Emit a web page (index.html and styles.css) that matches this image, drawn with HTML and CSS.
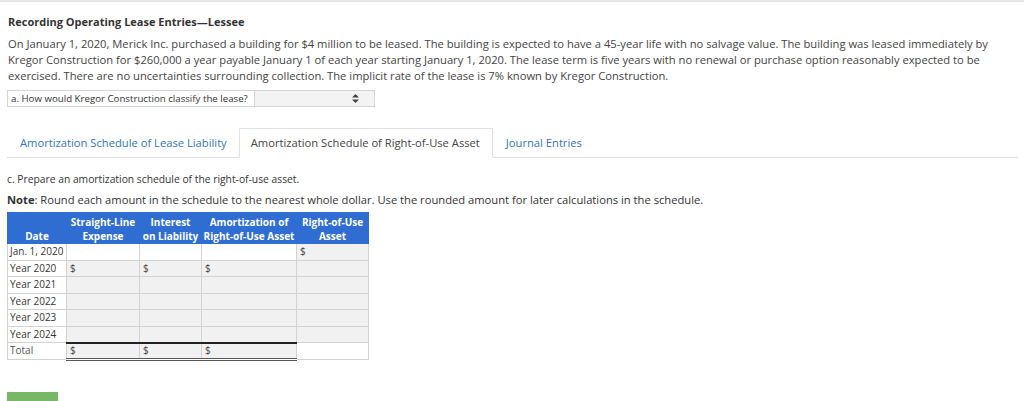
FILE: index.html
```html
<!DOCTYPE html>
<html>
<head>
<meta charset="utf-8">
<link rel="stylesheet" href="styles.css">
</head>
<body>
<div class="topline"></div>
<div class="page">
  <h1 class="title">Recording Operating Lease Entries—Lessee</h1>
  <p class="para">On January 1, 2020, Merick Inc. purchased a building for $4 million to be leased. The building is expected to have a 45-year life with no salvage value. The building was leased immediately by Kregor Construction for $260,000 a year payable January 1 of each year starting January 1, 2020. The lease term is five years with no renewal or purchase option reasonably expected to be exercised. There are no uncertainties surrounding collection. The implicit rate of the lease is 7% known by Kregor Construction.</p>
  <div class="question">
    <span class="qlabel">a. How would Kregor Construction classify the lease?</span>
    <span class="qselect"><svg class="arrows" width="7" height="9" viewBox="0 0 7 9"><path d="M3.5 0 L7 3.5 L0 3.5 Z M0 5.5 L7 5.5 L3.5 9 Z" fill="#444"/></svg></span>
  </div>
  <div class="tabs">
    <span class="tab">Amortization Schedule of Lease Liability</span>
    <span class="tab active">Amortization Schedule of Right-of-Use Asset</span>
    <span class="tab">Journal Entries</span>
    <span class="tabfill"></span>
  </div>
  <p class="instr">c. Prepare an amortization schedule of the right-of-use asset.</p>
  <p class="note"><b>Note</b>: Round each amount in the schedule to the nearest whole dollar. Use the rounded amount for later calculations in the schedule.</p>
  <table class="sched">
    <colgroup>
      <col class="c1"><col class="c2"><col class="c3"><col class="c4"><col class="c5">
    </colgroup>
    <thead>
      <tr>
        <th>Date</th>
        <th>Straight-Line<br>Expense</th>
        <th>Interest<br>on Liability</th>
        <th>Amortization of<br>Right-of-Use Asset</th>
        <th>Right-of-Use<br>Asset</th>
      </tr>
    </thead>
    <tbody>
      <tr><td class="date">Jan. 1, 2020</td><td class="w"></td><td class="w"></td><td class="w"></td><td class="g">$</td></tr>
      <tr><td class="date">Year 2020</td><td class="g">$</td><td class="g">$</td><td class="g">$</td><td class="g"></td></tr>
      <tr><td class="date">Year 2021</td><td class="g"></td><td class="g"></td><td class="g"></td><td class="g"></td></tr>
      <tr><td class="date">Year 2022</td><td class="g"></td><td class="g"></td><td class="g"></td><td class="g"></td></tr>
      <tr><td class="date">Year 2023</td><td class="g"></td><td class="g"></td><td class="g"></td><td class="g"></td></tr>
      <tr><td class="date">Year 2024</td><td class="g"></td><td class="g"></td><td class="g"></td><td class="g"></td></tr>
      <tr class="total"><td class="date tlabel">Total</td><td class="g t">$</td><td class="g t">$</td><td class="g t">$</td><td class="w"></td></tr>
    </tbody>
  </table>
  <div class="btn"></div>
</div>
</body>
</html>
```
FILE: styles.css
```css
html, body {
  margin: 0;
  padding: 0;
  background: #fff;
}
body {
  font-family: "Open Sans", "Liberation Sans", sans-serif;
  color: #333;
  overflow: hidden;
}
.topline {
  height: 2px;
  background: #e6e6e6;
}
.page {
  padding: 0 6px 0 7px;
}
.title {
  font-size: 11px;
  font-weight: 700;
  margin: 12px 0 0 1px;
  line-height: 16px;
  color: #333;
}
.para {
  font-size: 11.2px;
  line-height: 16px;
  margin: 6px 15px 0 1px;
  color: #444;
}
.question {
  display: flex;
  width: 366px;
  height: 15px;
  border: 1px solid #d4d4d4;
  margin-top: 6px;
  font-size: 9.7px;
  line-height: 15px;
}
.qlabel {
  width: 243px;
  padding-left: 3px;
  border-right: 1px solid #d4d4d4;
  color: #333;
}
.qselect {
  flex: 1;
  background: #f3f3f3;
  display: flex;
  justify-content: flex-end;
  align-items: center;
  padding-right: 15px;
}
.arrows { display: block; }
.tabs {
  display: flex;
  margin-top: 21px;
  height: 30px;
  font-size: 11.2px;
}
.tab {
  padding: 0 12px 0 13px;
  line-height: 30px;
  color: #3376b8;
  border-bottom: 1px solid #dde1e6;
  white-space: nowrap;
}
.tab.active {
  color: #444;
  border: 1px solid #dde1e6;
  border-bottom-color: #fff;
  line-height: 28px;
  padding: 0 12px 0 11px;
}
.tabfill {
  flex: 1;
  border-bottom: 1px solid #dde1e6;
}
.instr {
  font-size: 10.3px;
  line-height: 16px;
  margin: 13px 0 0 0;
}
.note {
  font-size: 11.2px;
  line-height: 16px;
  margin: 5px 0 0 0;
}
.note b { font-weight: 700; }
.sched {
  border-collapse: collapse;
  margin-top: 4px;
  font-size: 10px;
  table-layout: fixed;
  width: 361px;
}
col.c1 { width: 59px; }
col.c2 { width: 73px; }
col.c3 { width: 62px; }
col.c4 { width: 95px; }
col.c5 { width: 72px; }
.sched th {
  background: #2f6dd3;
  color: #fff;
  font-weight: 700;
  font-size: 10px;
  line-height: 14px;
  padding: 2px 0 0 0;
  vertical-align: bottom;
  text-align: center;
  white-space: nowrap;
  border: 1px solid #2f6dd3;
}
.sched tbody tr { height: 16.5px; }
.sched td {
  padding: 0 3px;
  border: 1px solid #d2d2d2;
  line-height: 13px;
  color: #444;
  white-space: nowrap;
}
.sched td.date {
  background: #fff;
  color: #333;
  padding-left: 2px;
}
.sched td.w { background: #fff; }
.sched td.g { background: #f1f1f1; }
.sched tr.total td.t {
  border-top: 2px solid #222;
  border-bottom: 3px double #555;
}
.sched td.tlabel { color: #555; }
.btn {
  margin-top: 31px;
  width: 51px;
  height: 20px;
  background: #77b866;
}
```
